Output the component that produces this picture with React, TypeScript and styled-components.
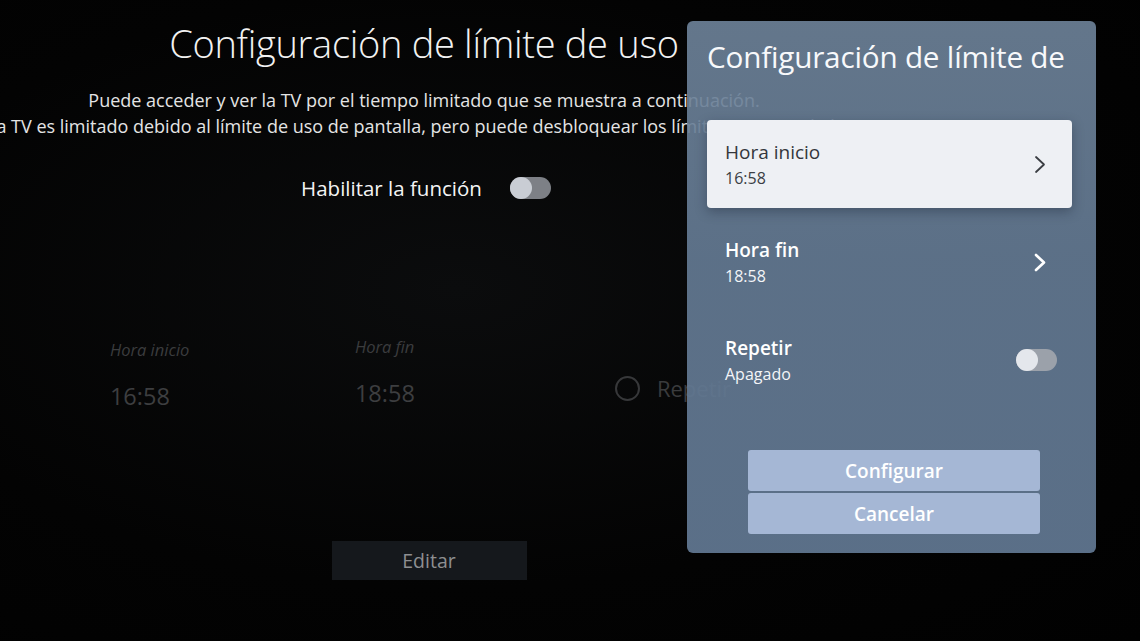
import styled, { createGlobalStyle } from 'styled-components';

const GlobalStyle = createGlobalStyle`
  html, body {
    margin: 0;
    padding: 0;
    background: #020202;
  }
  body {
    font-family: 'Open Sans', 'Noto Sans', sans-serif;
  }
`;

const Chevron = ({ color, weight }: { color: string; weight: number }) => (
  <svg width="12" height="19" viewBox="0 0 12 19" fill="none">
    <polyline
      points="2,2 10,9.5 2,17"
      stroke={color}
      strokeWidth={weight}
      strokeLinecap="round"
      strokeLinejoin="round"
    />
  </svg>
);

const App = () => (
  <>
    <GlobalStyle />
    <Screen>
      <Main>
        <Title>Configuración de límite de uso</Title>
        <Description>
          <p>Puede acceder y ver la TV por el tiempo limitado que se muestra a continuación.</p>
          <p>
            El uso de la TV es limitado debido al límite de uso de pantalla, pero puede desbloquear los límites
            ingresando la contraseña.
          </p>
        </Description>
        <EnableRow>
          <EnableLabel>Habilitar la función</EnableLabel>
          <Switch $track="#7d8086" $knob="#c9cdd4" />
        </EnableRow>
        <TimeRow>
          <TimeField $width={245}>
            <TimeLabel>Hora inicio</TimeLabel>
            <TimeValue>16:58</TimeValue>
          </TimeField>
          <TimeField $width={260} $lift={3}>
            <TimeLabel>Hora fin</TimeLabel>
            <TimeValue>18:58</TimeValue>
          </TimeField>
          <RepeatOption>
            <Radio />
            <RepeatText>Repetir</RepeatText>
          </RepeatOption>
        </TimeRow>
        <EditButton>Editar</EditButton>
      </Main>

      <Dialog>
        <DialogTitle>Configuración de límite de</DialogTitle>
        <Options>
          <Option $focused>
            <OptionText>
              <OptionName $focused>Hora inicio</OptionName>
              <OptionValue $focused>16:58</OptionValue>
            </OptionText>
            <Chevron color="#3a3d42" weight={1.8} />
          </Option>
          <Option>
            <OptionText>
              <OptionName>Hora fin</OptionName>
              <OptionValue>18:58</OptionValue>
            </OptionText>
            <Chevron color="#ffffff" weight={2.6} />
          </Option>
          <Option>
            <OptionText>
              <OptionName>Repetir</OptionName>
              <OptionValue>Apagado</OptionValue>
            </OptionText>
            <Switch $track="#9ba1aa" $knob="#e4e7ec" $shift={11} />
          </Option>
        </Options>
        <Actions>
          <ActionButton>Configurar</ActionButton>
          <ActionButton>Cancelar</ActionButton>
        </Actions>
      </Dialog>
    </Screen>
  </>
);

const Screen = styled.div`
  position: relative;
  width: 1140px;
  height: 641px;
  overflow: hidden;
  background: radial-gradient(ellipse at 40% 45%, #0b0c0d 0%, #030303 60%, #010101 100%);
`;

const Main = styled.div`
  width: 848px;
  display: flex;
  flex-direction: column;
  align-items: center;
  color: #f2f2f2;
`;

const Title = styled.h1`
  margin: 17px 0 0;
  font-size: 38px;
  font-weight: 300;
  line-height: 52px;
  letter-spacing: -0.3px;
  white-space: nowrap;
`;

const Description = styled.div`
  margin-top: 18px;
  display: flex;
  flex-direction: column;
  align-items: center;

  p {
    margin: 0;
    font-size: 18px;
    line-height: 26px;
    color: #e4e4e4;
    white-space: nowrap;
  }

  p + p {
    margin-left: 12px;
  }
`;

const EnableRow = styled.div`
  margin-top: 35px;
  height: 28px;
  display: flex;
  align-items: center;
  gap: 28px;
  margin-left: 4px;
`;

const EnableLabel = styled.span`
  font-size: 20.5px;
  line-height: 28px;
  font-weight: 500;
  color: #f4f4f4;
`;

const Switch = styled.span<{ $track: string; $knob: string; $shift?: number }>`
  position: relative;
  display: inline-block;
  width: 41px;
  height: 22px;
  border-radius: 11px;
  margin-right: ${({ $shift }) => -($shift ?? 0)}px;
  background: ${({ $track }) => $track};

  &::after {
    content: '';
    position: absolute;
    left: 0;
    top: 0;
    width: 22px;
    height: 22px;
    border-radius: 50%;
    background: ${({ $knob }) => $knob};
  }
`;

const TimeRow = styled.div`
  margin-top: 136px;
  margin-right: 7px;
  display: flex;
  align-items: flex-start;
`;

const TimeField = styled.div<{ $width: number; $lift?: number }>`
  width: ${({ $width }) => $width}px;
  display: flex;
  flex-direction: column;
  gap: 19px;
  margin-top: ${({ $lift }) => -($lift ?? 0)}px;
`;

const TimeLabel = styled.span`
  font-size: 16.5px;
  line-height: 23px;
  font-style: italic;
  color: #3b3c3e;
`;

const TimeValue = styled.span`
  font-size: 23.5px;
  line-height: 33px;
  color: #3d3e40;
`;

const RepeatOption = styled.div`
  margin-top: 35px;
  display: flex;
  align-items: center;
  gap: 17px;
`;

const Radio = styled.span`
  width: 21px;
  height: 21px;
  border-radius: 50%;
  border: 2px solid #37383a;
`;

const RepeatText = styled.span`
  font-size: 22px;
  line-height: 30px;
  color: #3a3b3d;
`;

const EditButton = styled.div`
  margin-top: 128px;
  margin-left: 10px;
  width: 195px;
  height: 39px;
  display: flex;
  align-items: center;
  justify-content: center;
  background: #15181c;
  color: #8e8f91;
  font-size: 19.5px;
`;

const Dialog = styled.div`
  position: absolute;
  left: 687px;
  top: 21px;
  width: 409px;
  height: 532px;
  box-sizing: border-box;
  padding: 16px 24px 19px 20px;
  border-radius: 6px;
  background: linear-gradient(180deg, rgba(110, 131, 154, 0.9) 0%, rgba(99, 121, 146, 0.92) 45%, rgba(96, 118, 144, 0.94) 100%);
  display: flex;
  flex-direction: column;
  color: #ffffff;
`;

const DialogTitle = styled.h2`
  margin: 0;
  font-size: 29.7px;
  font-weight: 400;
  line-height: 40px;
  white-space: nowrap;
  letter-spacing: -0.2px;
  color: #f8f9fb;
`;

const Options = styled.div`
  margin-top: 43px;
  display: flex;
  flex-direction: column;
`;

const Option = styled.div<{ $focused?: boolean }>`
  height: 88px;
  box-sizing: border-box;
  margin-bottom: 10px;
  padding: 0 26px 0 18px;
  display: flex;
  align-items: center;
  justify-content: space-between;
  border-radius: 4px;
  background: ${({ $focused }) => ($focused ? '#eef0f4' : 'transparent')};
  box-shadow: ${({ $focused }) => ($focused ? '0 4px 12px rgba(20, 30, 45, 0.35)' : 'none')};
`;

const OptionText = styled.div`
  display: flex;
  flex-direction: column;
  gap: 2px;
`;

const OptionName = styled.span<{ $focused?: boolean }>`
  font-size: 19px;
  font-weight: ${({ $focused }) => ($focused ? 400 : 600)};
  color: ${({ $focused }) => ($focused ? '#33363b' : '#ffffff')};
`;

const OptionValue = styled.span<{ $focused?: boolean }>`
  font-size: 16px;
  font-weight: ${({ $focused }) => ($focused ? 400 : 500)};
  color: ${({ $focused }) => ($focused ? '#3b3e44' : '#f3f5f8')};
`;

const Actions = styled.div`
  margin-top: auto;
  padding: 0 32px 0 41px;
  display: flex;
  flex-direction: column;
  gap: 2px;
`;

const ActionButton = styled.div`
  height: 41px;
  display: flex;
  align-items: center;
  justify-content: center;
  border-radius: 3px;
  background: #a5b7d5;
  color: #ffffff;
  font-size: 19px;
  font-weight: 600;
`;

export default App;
